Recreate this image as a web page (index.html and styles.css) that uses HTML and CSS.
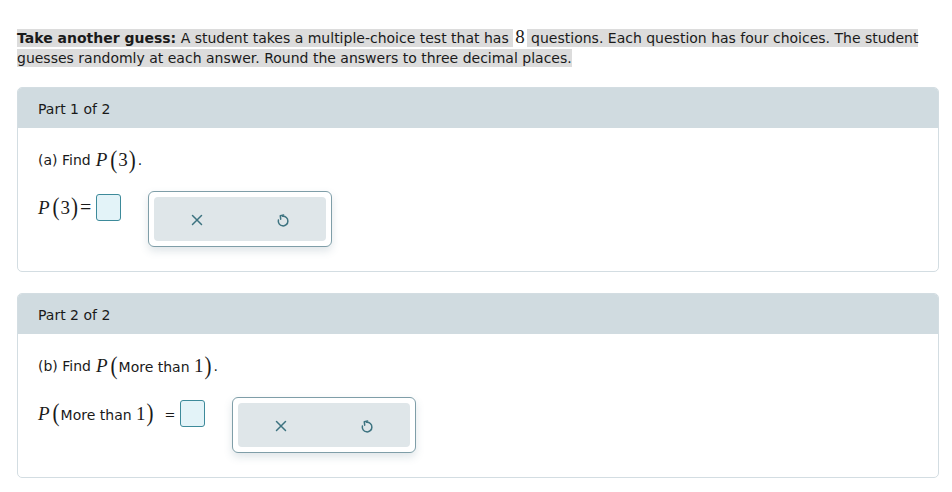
FILE: index.html
```html
<!DOCTYPE html>
<html>
<head>
<meta charset="utf-8">
<link rel="stylesheet" href="styles.css">
</head>
<body>
<div class="page">
  <p class="intro"><span class="hl"><b>Take another guess:</b> A student takes a multiple-choice test that has <span class="mnum">8</span> questions. Each question has four choices. The student guesses randomly at each answer. Round the answers to three decimal places.</span></p>

  <section class="card">
    <div class="card-head">Part 1 of 2</div>
    <div class="card-body">
      <p class="q">(a) Find <span class="math"><i>P</i><span class="paren">(</span>3<span class="paren">)</span></span>.</p>
      <div class="answer-row">
        <span class="math lhs"><i>P</i><span class="paren">(</span>3<span class="paren">)</span><span class="seq">=</span></span>
        <span class="box"></span>
        <div class="tools">
          <div class="tools-inner">
            <svg class="ic" width="14" height="14" viewBox="0 0 14 14"><path d="M2.5 2.5 L11.5 11.5 M11.5 2.5 L2.5 11.5" stroke="#3d7380" stroke-width="1.5" fill="none" stroke-linecap="round"/></svg>
            <svg class="ic" width="14" height="16" viewBox="0 0 14 16"><path d="M6.6 4.3 A4.8 4.8 0 1 1 2.4 8.0" stroke="#3d7380" stroke-width="1.5" fill="none" stroke-linecap="round"/><path d="M4.7 7.2 L4.3 3.8 L7.6 3.0" stroke="#3d7380" stroke-width="1.5" fill="none" stroke-linecap="round" stroke-linejoin="round"/></svg>
          </div>
        </div>
      </div>
    </div>
  </section>

  <section class="card">
    <div class="card-head">Part 2 of 2</div>
    <div class="card-body">
      <p class="q">(b) Find <span class="math"><i>P</i><span class="paren">(</span><span class="sans">More than </span>1<span class="paren">)</span></span>.</p>
      <div class="answer-row">
        <span class="math lhs"><i>P</i><span class="paren">(</span><span class="sans">More than </span>1<span class="paren">)</span><span class="sans eq">=</span></span>
        <span class="box"></span>
        <div class="tools">
          <div class="tools-inner">
            <svg class="ic" width="14" height="14" viewBox="0 0 14 14"><path d="M2.5 2.5 L11.5 11.5 M11.5 2.5 L2.5 11.5" stroke="#3d7380" stroke-width="1.5" fill="none" stroke-linecap="round"/></svg>
            <svg class="ic" width="14" height="16" viewBox="0 0 14 16"><path d="M6.6 4.3 A4.8 4.8 0 1 1 2.4 8.0" stroke="#3d7380" stroke-width="1.5" fill="none" stroke-linecap="round"/><path d="M4.7 7.2 L4.3 3.8 L7.6 3.0" stroke="#3d7380" stroke-width="1.5" fill="none" stroke-linecap="round" stroke-linejoin="round"/></svg>
          </div>
        </div>
      </div>
    </div>
  </section>
</div>
</body>
</html>
```
FILE: styles.css
```css
html, body {
  margin: 0;
  padding: 0;
  background: #ffffff;
}
body {
  font-family: "DejaVu Sans", Verdana, sans-serif;
  font-size: 14px;
  color: #1a1a1a;
}
.page {
  padding: 28px 13px 0 17px;
}
.intro {
  margin: 0;
  line-height: 20px;
  width: 912px;
}
.hl {
  background: #dcdcdc;
  padding: 1px 0;
}
.hl b {
  font-weight: bold;
}
.mnum {
  font-family: "Liberation Serif", "Times New Roman", serif;
  font-size: 19px;
  line-height: 18px;
  background: #ffffff;
  padding: 0 2px;
}
.card {
  margin-top: 19px;
  width: 920px;
  border: 1px solid #d3dde2;
  border-radius: 5px;
  overflow: hidden;
}
.card + .card {
  margin-top: 21px;
}
.card-head {
  background: #d0dbe0;
  height: 40px;
  padding-left: 20px;
  display: flex;
  align-items: center;
  padding-top: 2px;
  box-sizing: border-box;
}
.card-body {
  padding: 19px 20px 23px;
  height: 143px;
  box-sizing: border-box;
}
.q {
  margin: 0;
  height: 26px;
  display: flex;
  align-items: center;
}
.math {
  font-family: "Liberation Serif", "Times New Roman", serif;
  font-size: 19px;
  display: inline-flex;
  align-items: center;
  margin: 0 1px 0 5px;
}
.math i {
  margin-right: 2px;
}
.paren {
  font-size: 21px;
  transform: scaleY(1.15);
  display: inline-block;
  margin: 0 1px;
}
.sans {
  font-family: "DejaVu Sans", Verdana, sans-serif;
  font-size: 14px;
  white-space: pre;
  padding-top: 2px;
}
.seq {
  margin-left: 1px;
  font-size: 20px;
}
.eq {
  margin-left: 10px;
  font-size: 13px;
}
.answer-row {
  margin-top: 21px;
  display: flex;
  align-items: flex-start;
}
.lhs {
  margin: 0;
  height: 27px;
}
.box {
  width: 23px;
  height: 25px;
  border: 1px solid #3d8a9a;
  border-radius: 3px;
  background: #e3f3f8;
  margin-left: 5px;
  flex: none;
}
.tools {
  margin-top: -3px;
  margin-left: 27px;
  width: 184px;
  height: 56px;
  box-sizing: border-box;
  border: 1px solid #7f9ea8;
  border-radius: 6px;
  background: #ffffff;
  padding: 5px;
  box-shadow: 0 4px 8px rgba(80, 110, 125, 0.18);
}
.tools-inner {
  height: 100%;
  background: #dfe6e9;
  border-radius: 4px;
  display: flex;
  align-items: center;
  justify-content: space-around;
  padding-top: 2px;
  box-sizing: border-box;
}
.ic {
  display: block;
}
```
